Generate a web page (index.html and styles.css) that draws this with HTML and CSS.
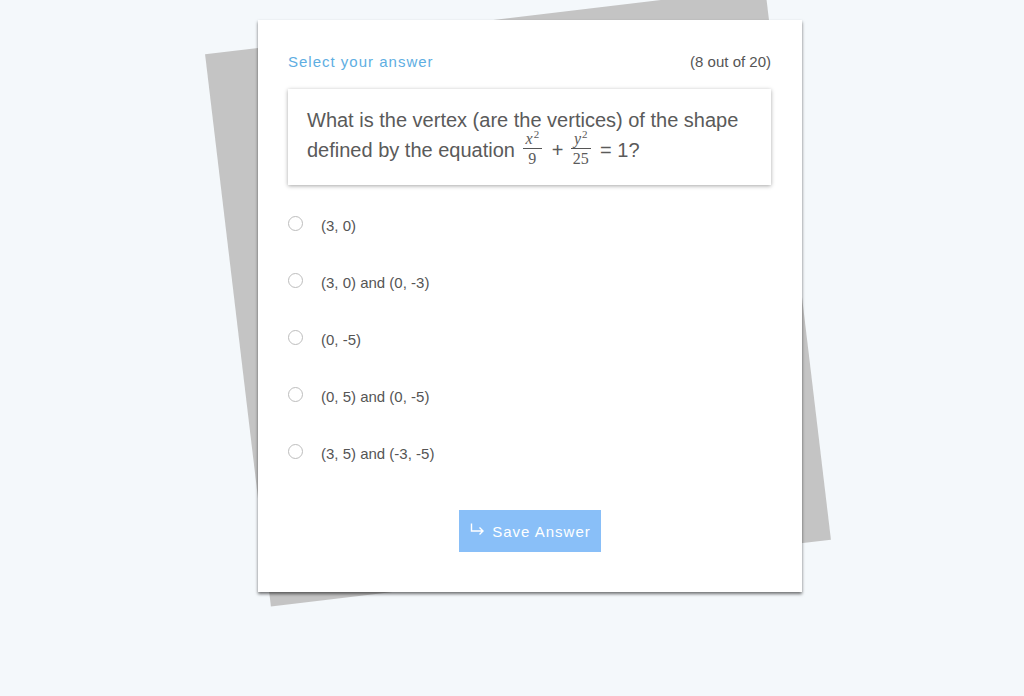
FILE: index.html
```html
<!DOCTYPE html>
<html>
<head>
<meta charset="utf-8">
<link rel="stylesheet" href="styles.css">
</head>
<body>
<div class="stage">
  <div class="card">
    <div class="card-head">
      <span class="prompt">Select your answer</span>
      <span class="count">(8 out of 20)</span>
    </div>
    <div class="question">
      What is the vertex (are the vertices) of the shape defined by the equation
      <span class="frac"><span class="num"><i>x</i><sup>2</sup></span><span class="den">9</span></span>
      +
      <span class="frac"><span class="num"><i>y</i><sup>2</sup></span><span class="den">25</span></span>
      = 1?
    </div>
    <ul class="options">
      <li class="option"><span class="radio"></span><span class="label">(3, 0)</span></li>
      <li class="option"><span class="radio"></span><span class="label">(3, 0) and (0, -3)</span></li>
      <li class="option"><span class="radio"></span><span class="label">(0, -5)</span></li>
      <li class="option"><span class="radio"></span><span class="label">(0, 5) and (0, -5)</span></li>
      <li class="option"><span class="radio"></span><span class="label">(3, 5) and (-3, -5)</span></li>
    </ul>
    <div class="actions">
      <button class="save">
        <svg class="save-icon" width="16" height="13" viewBox="0 0 16 13"><path d="M2.5 0.5 V8 H14 M10.5 4.5 L14 8 L10.5 11.5" fill="none" stroke="#fff" stroke-width="1.4"/></svg>
        <span>Save Answer</span>
      </button>
    </div>
  </div>
</div>
</body>
</html>
```
FILE: styles.css
```css
html, body {
  margin: 0;
  padding: 0;
}
body {
  background: #f4f8fb;
  font-family: "Liberation Sans", Arial, sans-serif;
  color: #555;
  height: 696px;
  overflow: hidden;
}
.stage {
  padding: 20px 0 0 258px;
}
.card {
  position: relative;
  width: 544px;
  box-sizing: border-box;
  padding: 31px 31px 40px 30px;
  background: #fff;
  box-shadow: 0 2px 3px rgba(0, 0, 0, 0.55);
}
.card::before {
  content: "";
  position: absolute;
  left: -22px;
  top: -1px;
  width: 564px;
  height: 556px;
  background: #c4c4c4;
  transform: rotate(-6.8deg);
  z-index: -1;
}
.card-head {
  display: flex;
  justify-content: space-between;
  align-items: center;
  height: 22px;
  font-size: 15px;
  line-height: 22px;
}
.prompt {
  color: #5eaee2;
  letter-spacing: 1px;
}
.count {
  color: #555;
}
.question {
  margin-top: 16px;
  padding: 16px 20px 20px 19px;
  font-size: 20px;
  line-height: 30px;
  height: 60px;
  color: #5a5a5a;
  box-shadow: 0 1px 4px rgba(0, 0, 0, 0.35);
}
.frac {
  display: inline-flex;
  flex-direction: column;
  align-items: center;
  vertical-align: 13px;
  margin: -10px 4px -10px 2px;
  font-family: "Liberation Serif", "DejaVu Serif", serif;
  font-size: 16px;
  line-height: 15px;
}
.frac .num {
  padding: 0 3px 2px;
  border-bottom: 1px solid #555;
}
.frac .num i {
  margin-right: 1px;
}
.frac .num sup {
  font-size: 11px;
  vertical-align: 6px;
  line-height: 0;
}
.frac .den {
  padding-top: 2px;
}
.options {
  list-style: none;
  margin: 12px 0 0;
  padding: 0;
}
.option {
  display: flex;
  align-items: center;
  height: 57px;
  font-size: 15px;
}
.radio {
  width: 13px;
  height: 13px;
  border: 1px solid #bdbdbd;
  border-radius: 50%;
  margin-top: -4px;
  flex-shrink: 0;
}
.label {
  margin-left: 18px;
  color: #555;
}
.actions {
  display: flex;
  justify-content: center;
  margin-top: 28px;
}
.save {
  display: flex;
  align-items: center;
  justify-content: center;
  gap: 7px;
  width: 142px;
  height: 42px;
  border: 0;
  background: #89bff8;
  color: #fff;
  font-family: "Liberation Sans", Arial, sans-serif;
  font-size: 15px;
  letter-spacing: 1px;
  padding: 0;
  margin-left: 1px;
}
.save-icon {
  margin-top: -4px;
}
```
